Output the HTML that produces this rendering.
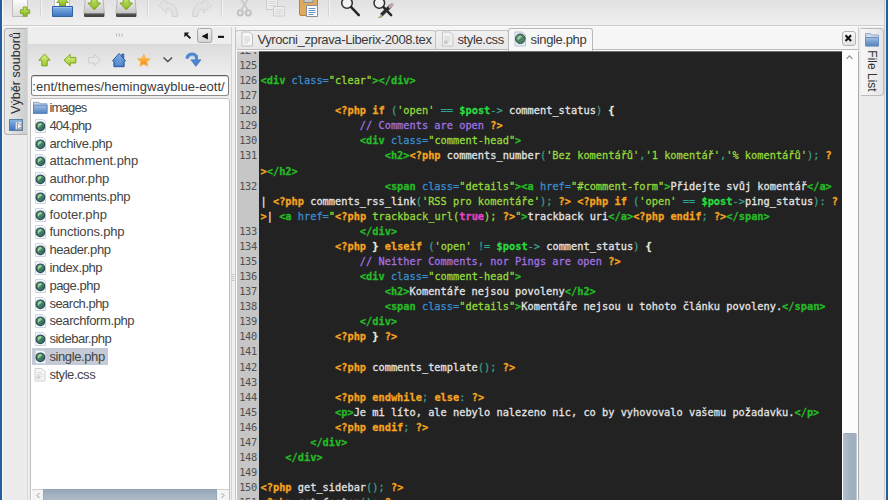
<!DOCTYPE html>
<html lang="cs"><head><meta charset="utf-8"><title>single.php</title>
<style>
html,body{margin:0;padding:0}
body{width:888px;height:500px;overflow:hidden;position:relative;background:#ececec;font-family:"Liberation Sans",sans-serif;font-size:13px;color:#333}
.abs,.abs>*{position:absolute}
div{box-sizing:border-box}
#win{position:absolute;left:0;top:0;width:888px;height:500px;overflow:hidden}
#win>*{position:absolute}
#bl{left:0;top:0;width:2px;height:500px;background:#235f9e}
#bl2{left:2px;top:0;width:1px;height:500px;background:#fbfbfb}
#br{left:886px;top:0;width:2px;height:500px;background:#235f9e}
#br2{left:884px;top:0;width:2px;height:500px;background:linear-gradient(90deg,#d2c9c9 50%,#e6e8ef 50%)}
#tb{left:3px;top:0;width:882px;height:25px;background:linear-gradient(#e1e1e1,#f0f0f0)}
#tbl{left:3px;top:25px;width:882px;height:2px;background:linear-gradient(#cdcdcd 50%,#fafafa 50%)}
.sep{top:0;width:1px;height:20px;background:#d2d2d2;position:absolute}
.ico{position:absolute}
/* left tab */
#ltab{left:4px;top:28px;width:23px;height:107px;border:1px solid #b4b4b4;border-right:none;border-radius:4px 0 0 4px;background:linear-gradient(90deg,#eaeaea,#cdcdcd)}
#ltab span{position:absolute;left:-38.800px;top:25px;width:100px;height:20px;line-height:20px;transform:rotate(-90deg);font-size:12.6px;color:#2b2b2b;white-space:nowrap;text-align:left}
/* left panel */
#lp{left:27px;top:27px;width:204px;height:473px;background:#eeeeee;border-left:1px solid #d8d8d8}
#lph{left:28px;top:27px;width:203px;height:18px;background:#eeeeee;border-bottom:1px solid #d9d9d9}
#nav{left:28px;top:45px;width:203px;height:31px;background:linear-gradient(#dcdcdc,#efefef)}
#path{left:31px;top:75px;width:198px;height:21px;background:#fff;border:1px solid #7d7d7d;border-top-color:#5f5f5f;border-bottom-color:#8c8c8c;border-radius:3px;overflow:hidden;box-shadow:inset 0 1px 1px #d8d8d8}
#pathin{position:absolute;left:1px;top:0;width:195px;height:19px;overflow:hidden}
#path span{position:absolute;left:-0.700px;top:2px;line-height:17px;font-size:13px;color:#3c3c3c;white-space:nowrap;letter-spacing:0.03px}
#fl{left:30px;top:98px;width:200px;height:405px;background:#fff;border:1px solid #bebebe;border-radius:3px}
.fr{position:absolute;left:33px;height:18px;white-space:nowrap}
.fi{position:absolute;left:0;top:1px;width:16px;height:16px}
.fn{position:absolute;left:16.400px;top:0;height:18px;line-height:18px;font-size:13px;color:#444}
.selbg{position:absolute;left:-1px;top:0;width:76px;height:17px;background:#c5cbd6}
#hs{left:32px;top:489px;width:197px;height:11px;background:#f4f4f4;border-top:1px solid #d0d0d0}
#hst{left:43px;top:489px;width:174px;height:14px;background:linear-gradient(#96a6b7,#a9b7c5 60%,#b4c0cc);border-left:1px solid #97a8ba;border-right:1px solid #97a8ba}
/* splitter */
#spl{left:231px;top:27px;width:4px;height:473px;background:#f1f1f1;border-left:1px solid #d4d4d4}
/* tabs */
#tabbar{left:235px;top:27px;width:624px;height:22px;background:#f6f6f6;border-left:1px solid #c6c6c6;border-right:1px solid #cfcfcf}
.tab{position:absolute;top:30px;height:20px;border:1px solid #c2c2c2;border-bottom:none;border-radius:3px 3px 0 0;background:linear-gradient(#f1f1f1,#e6e6e6);white-space:nowrap}
.tab span{position:absolute;top:0;line-height:17px;font-size:13px;color:#3a3a3a}
.tab.act{top:28px;height:23px;background:#f7f7f7;border-color:#b9b9b9}
.tab.act span{top:2px}
#tabline{left:235px;top:49px;width:624px;height:2px;background:linear-gradient(#bcbcbc 50%,#fbfbfb 50%)}
#ed{left:259px;top:51px;width:583px;height:449px;background:#222222;border-top:1px solid #6e6e6e;overflow:hidden}
#gut{left:237px;top:51px;width:22px;height:449px;background:#c6c6c6;border-top:1px solid #d8d8d8;overflow:hidden}
#gutl{left:235px;top:49px;width:2px;height:451px;background:linear-gradient(90deg,#c6c6c6 50%,#fbfbfb 50%)}
.ln,.cl{position:absolute;font-family:"DejaVu Sans Mono","Liberation Mono",monospace;font-size:10.32px;line-height:15px;height:15px;white-space:pre;transform:scaleY(1.09);transform-origin:0 11px}
.ln{left:239.3px;color:#505050;letter-spacing:-0.4px}
.cl{left:260.5px;color:#e6e6e6;-webkit-text-stroke:0.25px}
.t{color:#26bb26;font-weight:bold}
.a{color:#3a8ed0}
.s{color:#98dc3a}
.k{color:#f3a420;font-weight:bold}
.p{color:#3d9f8b}
.o{color:#2aa596}
.v{color:#2bd940;font-weight:bold}
.c{color:#a372e2}
.m{color:#e644c4;font-weight:bold}
.b{color:#ecebd2;font-weight:bold}
#vs{left:842px;top:51px;width:17px;height:449px;background:#fcfcfc;border-right:1px solid #aeaaaa}
#vst{left:843px;top:433px;width:14px;height:70px;background:linear-gradient(90deg,#b4c0cb,#a3b2c1 45%,#9badbd 88%,#ccd5de);border-top:1px solid #97a8ba;border-radius:2px 2px 0 0}
#cls{left:841.500px;top:31px;width:14px;height:14.500px;border:1px solid #b5b5b5;border-radius:3px;background:linear-gradient(#f8f8f8,#e4e4e4)}
#rtab{left:861px;top:28px;width:22.500px;height:68px;border:1px solid #bdbdbd;border-left:none;border-radius:0 4px 4px 0;background:linear-gradient(90deg,#f6f6f6,#e6e6e6)}
#rtab span{position:absolute;left:-14px;top:31.500px;width:50px;height:20px;line-height:20px;transform:rotate(90deg);font-size:12px;color:#333;white-space:nowrap;text-align:center}
#rp{left:860px;top:27px;width:25px;height:473px;background:#ececec}
</style></head><body>
<svg width="0" height="0" style="position:absolute">
<defs>
<linearGradient id="gG" x1="0" y1="0" x2="0" y2="1"><stop offset="0" stop-color="#c8e66a"/><stop offset="1" stop-color="#86b81f"/></linearGradient>
<linearGradient id="gB" x1="0" y1="0" x2="0" y2="1"><stop offset="0" stop-color="#86b4e8"/><stop offset="1" stop-color="#3a72bc"/></linearGradient>
<linearGradient id="gP" x1="0" y1="0" x2="0" y2="1"><stop offset="0" stop-color="#ffffff"/><stop offset="1" stop-color="#dcdcdc"/></linearGradient>
<linearGradient id="gD" x1="0" y1="0" x2="0" y2="1"><stop offset="0" stop-color="#f2f2f2"/><stop offset="0.8" stop-color="#bdbdbd"/><stop offset="1" stop-color="#555"/></linearGradient>
<linearGradient id="gB2" x1="0" y1="0" x2="0" y2="1"><stop offset="0" stop-color="#a3c0e4"/><stop offset="1" stop-color="#4f7fbe"/></linearGradient>
<linearGradient id="gG2" x1="0" y1="0" x2="0" y2="1"><stop offset="0" stop-color="#dcee8c"/><stop offset="1" stop-color="#9fca2e"/></linearGradient>
<linearGradient id="gBtn" x1="0" y1="0" x2="0" y2="1"><stop offset="0" stop-color="#efefef"/><stop offset="1" stop-color="#d4d4d4"/></linearGradient>
<linearGradient id="gS" x1="0" y1="0" x2="0" y2="1"><stop offset="0" stop-color="#ffd05c"/><stop offset="1" stop-color="#f5820f"/></linearGradient>
</defs></svg>
<div id="win">
<div id="tb"></div><div id="tbl"></div>
<div id="rp"></div>
<div id="lp"></div><div id="lph"></div><div id="nav"></div>
<div id="ltab"><span>Výběr souborů</span></div>
<div id="path"><div id="pathin"><span>:ent/themes/hemingwayblue-eott/</span></div></div>
<div id="fl"></div>
<div class="fr" style="top:99.1px"><svg class="fi" viewBox="0 0 16 16"><path d="M.5 2.300h5.300l1 1.500h7.200v9.700h-13.500z" fill="#c5d4e6" stroke="#8aa3c4"/><path d="M.5 5.200h13.500v8.300h-13.500z" fill="url(#gB2)" stroke="#5f86bb"/></svg><span class="fn" style="letter-spacing:-0.787px">images</span></div>
<div class="fr" style="top:116.87px"><svg class="fi" viewBox="0 0 16 16"><path d="M2.500 1.500h7.500l2.500 2.500v10.500h-10z" fill="#f5f7fb" stroke="#cdd5e4"/><circle cx="7.400" cy="8.300" r="4.300" fill="#43805f" stroke="#2b4d5e" stroke-width="1.200"/><path d="M4.700 7.200c.8-2 2.800-2.600 3.800-1.700s-.4 1.900-1.400 2.300s-1.300 2.200-2.200 1.400z" fill="#9ed09a"/><path d="M8.500 10.500c1-.2 2-1 2.300-2" stroke="#2a4f70" fill="none"/></svg><span class="fn" style="letter-spacing:-0.771px">404.php</span></div>
<div class="fr" style="top:134.64px"><svg class="fi" viewBox="0 0 16 16"><path d="M2.500 1.500h7.500l2.500 2.500v10.500h-10z" fill="#f5f7fb" stroke="#cdd5e4"/><circle cx="7.400" cy="8.300" r="4.300" fill="#43805f" stroke="#2b4d5e" stroke-width="1.200"/><path d="M4.700 7.200c.8-2 2.800-2.600 3.800-1.700s-.4 1.900-1.400 2.300s-1.300 2.200-2.200 1.400z" fill="#9ed09a"/><path d="M8.500 10.500c1-.2 2-1 2.300-2" stroke="#2a4f70" fill="none"/></svg><span class="fn" style="letter-spacing:-0.402px">archive.php</span></div>
<div class="fr" style="top:152.41px"><svg class="fi" viewBox="0 0 16 16"><path d="M2.500 1.500h7.500l2.500 2.500v10.500h-10z" fill="#f5f7fb" stroke="#cdd5e4"/><circle cx="7.400" cy="8.300" r="4.300" fill="#43805f" stroke="#2b4d5e" stroke-width="1.200"/><path d="M4.700 7.200c.8-2 2.800-2.600 3.800-1.700s-.4 1.900-1.400 2.300s-1.300 2.200-2.200 1.400z" fill="#9ed09a"/><path d="M8.500 10.500c1-.2 2-1 2.300-2" stroke="#2a4f70" fill="none"/></svg><span class="fn" style="letter-spacing:-0.06px">attachment.php</span></div>
<div class="fr" style="top:170.18px"><svg class="fi" viewBox="0 0 16 16"><path d="M2.500 1.500h7.500l2.500 2.500v10.500h-10z" fill="#f5f7fb" stroke="#cdd5e4"/><circle cx="7.400" cy="8.300" r="4.300" fill="#43805f" stroke="#2b4d5e" stroke-width="1.200"/><path d="M4.700 7.200c.8-2 2.800-2.600 3.800-1.700s-.4 1.900-1.400 2.300s-1.300 2.200-2.200 1.400z" fill="#9ed09a"/><path d="M8.500 10.500c1-.2 2-1 2.300-2" stroke="#2a4f70" fill="none"/></svg><span class="fn" style="letter-spacing:-0.185px">author.php</span></div>
<div class="fr" style="top:187.95px"><svg class="fi" viewBox="0 0 16 16"><path d="M2.500 1.500h7.500l2.500 2.500v10.500h-10z" fill="#f5f7fb" stroke="#cdd5e4"/><circle cx="7.400" cy="8.300" r="4.300" fill="#43805f" stroke="#2b4d5e" stroke-width="1.200"/><path d="M4.700 7.200c.8-2 2.800-2.600 3.800-1.700s-.4 1.900-1.400 2.300s-1.300 2.200-2.200 1.400z" fill="#9ed09a"/><path d="M8.500 10.500c1-.2 2-1 2.300-2" stroke="#2a4f70" fill="none"/></svg><span class="fn" style="letter-spacing:-0.38px">comments.php</span></div>
<div class="fr" style="top:205.72px"><svg class="fi" viewBox="0 0 16 16"><path d="M2.500 1.500h7.500l2.500 2.500v10.500h-10z" fill="#f5f7fb" stroke="#cdd5e4"/><circle cx="7.400" cy="8.300" r="4.300" fill="#43805f" stroke="#2b4d5e" stroke-width="1.200"/><path d="M4.700 7.200c.8-2 2.800-2.600 3.800-1.700s-.4 1.900-1.400 2.300s-1.300 2.200-2.200 1.400z" fill="#9ed09a"/><path d="M8.500 10.500c1-.2 2-1 2.300-2" stroke="#2a4f70" fill="none"/></svg><span class="fn" style="letter-spacing:-0.023px">footer.php</span></div>
<div class="fr" style="top:223.49px"><svg class="fi" viewBox="0 0 16 16"><path d="M2.500 1.500h7.500l2.500 2.500v10.500h-10z" fill="#f5f7fb" stroke="#cdd5e4"/><circle cx="7.400" cy="8.300" r="4.300" fill="#43805f" stroke="#2b4d5e" stroke-width="1.200"/><path d="M4.700 7.200c.8-2 2.800-2.600 3.800-1.700s-.4 1.900-1.400 2.300s-1.300 2.200-2.200 1.400z" fill="#9ed09a"/><path d="M8.500 10.500c1-.2 2-1 2.300-2" stroke="#2a4f70" fill="none"/></svg><span class="fn" style="letter-spacing:-0.188px">functions.php</span></div>
<div class="fr" style="top:241.26px"><svg class="fi" viewBox="0 0 16 16"><path d="M2.500 1.500h7.500l2.500 2.500v10.500h-10z" fill="#f5f7fb" stroke="#cdd5e4"/><circle cx="7.400" cy="8.300" r="4.300" fill="#43805f" stroke="#2b4d5e" stroke-width="1.200"/><path d="M4.700 7.200c.8-2 2.800-2.600 3.800-1.700s-.4 1.900-1.400 2.300s-1.300 2.200-2.200 1.400z" fill="#9ed09a"/><path d="M8.500 10.500c1-.2 2-1 2.300-2" stroke="#2a4f70" fill="none"/></svg><span class="fn" style="letter-spacing:-0.388px">header.php</span></div>
<div class="fr" style="top:259.03px"><svg class="fi" viewBox="0 0 16 16"><path d="M2.500 1.500h7.500l2.500 2.500v10.500h-10z" fill="#f5f7fb" stroke="#cdd5e4"/><circle cx="7.400" cy="8.300" r="4.300" fill="#43805f" stroke="#2b4d5e" stroke-width="1.200"/><path d="M4.700 7.200c.8-2 2.800-2.600 3.800-1.700s-.4 1.900-1.400 2.300s-1.300 2.200-2.200 1.400z" fill="#9ed09a"/><path d="M8.500 10.500c1-.2 2-1 2.300-2" stroke="#2a4f70" fill="none"/></svg><span class="fn" style="letter-spacing:-0.399px">index.php</span></div>
<div class="fr" style="top:276.8px"><svg class="fi" viewBox="0 0 16 16"><path d="M2.500 1.500h7.500l2.500 2.500v10.500h-10z" fill="#f5f7fb" stroke="#cdd5e4"/><circle cx="7.400" cy="8.300" r="4.300" fill="#43805f" stroke="#2b4d5e" stroke-width="1.200"/><path d="M4.700 7.200c.8-2 2.800-2.600 3.800-1.700s-.4 1.900-1.400 2.300s-1.300 2.200-2.200 1.400z" fill="#9ed09a"/><path d="M8.500 10.500c1-.2 2-1 2.300-2" stroke="#2a4f70" fill="none"/></svg><span class="fn" style="letter-spacing:-0.492px">page.php</span></div>
<div class="fr" style="top:294.57px"><svg class="fi" viewBox="0 0 16 16"><path d="M2.500 1.500h7.500l2.500 2.500v10.500h-10z" fill="#f5f7fb" stroke="#cdd5e4"/><circle cx="7.400" cy="8.300" r="4.300" fill="#43805f" stroke="#2b4d5e" stroke-width="1.200"/><path d="M4.700 7.200c.8-2 2.800-2.600 3.800-1.700s-.4 1.900-1.400 2.300s-1.300 2.200-2.200 1.400z" fill="#9ed09a"/><path d="M8.500 10.500c1-.2 2-1 2.300-2" stroke="#2a4f70" fill="none"/></svg><span class="fn" style="letter-spacing:-0.513px">search.php</span></div>
<div class="fr" style="top:312.34px"><svg class="fi" viewBox="0 0 16 16"><path d="M2.500 1.500h7.500l2.500 2.500v10.500h-10z" fill="#f5f7fb" stroke="#cdd5e4"/><circle cx="7.400" cy="8.300" r="4.300" fill="#43805f" stroke="#2b4d5e" stroke-width="1.200"/><path d="M4.700 7.200c.8-2 2.800-2.600 3.800-1.700s-.4 1.900-1.400 2.300s-1.300 2.200-2.200 1.400z" fill="#9ed09a"/><path d="M8.500 10.500c1-.2 2-1 2.300-2" stroke="#2a4f70" fill="none"/></svg><span class="fn" style="letter-spacing:-0.395px">searchform.php</span></div>
<div class="fr" style="top:330.11px"><svg class="fi" viewBox="0 0 16 16"><path d="M2.500 1.500h7.500l2.500 2.500v10.500h-10z" fill="#f5f7fb" stroke="#cdd5e4"/><circle cx="7.400" cy="8.300" r="4.300" fill="#43805f" stroke="#2b4d5e" stroke-width="1.200"/><path d="M4.700 7.200c.8-2 2.800-2.600 3.800-1.700s-.4 1.900-1.400 2.300s-1.300 2.200-2.200 1.400z" fill="#9ed09a"/><path d="M8.500 10.500c1-.2 2-1 2.300-2" stroke="#2a4f70" fill="none"/></svg><span class="fn" style="letter-spacing:-0.494px">sidebar.php</span></div>
<div class="fr" style="top:347.88px"><div class="selbg"></div><svg class="fi" viewBox="0 0 16 16"><path d="M2.500 1.500h7.500l2.500 2.500v10.500h-10z" fill="#f5f7fb" stroke="#cdd5e4"/><circle cx="7.400" cy="8.300" r="4.300" fill="#43805f" stroke="#2b4d5e" stroke-width="1.200"/><path d="M4.700 7.200c.8-2 2.800-2.600 3.800-1.700s-.4 1.900-1.400 2.300s-1.300 2.200-2.200 1.400z" fill="#9ed09a"/><path d="M8.500 10.500c1-.2 2-1 2.300-2" stroke="#2a4f70" fill="none"/></svg><span class="fn" style="letter-spacing:-0.388px">single.php</span></div>
<div class="fr" style="top:365.65px"><svg class="fi" viewBox="0 0 16 16"><path d="M2 1.500h7l3 3v9.500h-10z" fill="#f6f6f6" stroke="#d2d2d2"/><path d="M4 5.500h5M4 7.500h6M4 9.500h6M4 11.500h4" stroke="#dcdcdc"/><rect x="3.500" y="8.500" width="3.500" height="3.500" fill="#d6d6d6"/></svg><span class="fn" style="letter-spacing:-0.449px">style.css</span></div>
<div id="hs"></div><div id="hst"></div>
<div id="spl"></div>
<div id="tabbar"></div>
<div class="tab" style="left:235px;width:201px"><span style="left:21.4px;letter-spacing:-0.38px">Vyrocni_zprava-Liberix-2008.tex</span></div>
<div class="tab" style="left:435px;width:74px"><span style="left:21.5px;letter-spacing:-0.4px">style.css</span></div>
<div id="tabline"></div>
<div class="tab act" style="left:508px;width:85px"><span style="left:21.6px;letter-spacing:-0.36px">single.php</span></div>
<div id="cls"></div>
<div id="ed"></div>
<div id="gut"></div><div id="gutl"></div>
<div id="codewrap" style="left:0;top:0;width:842px;height:500px;overflow:hidden;clip-path:inset(52px 0 0 0)">
<div class="ln" style="top:42.87px">124</div>
<div class="ln" style="top:57.95px">125</div>
<div class="ln" style="top:73.03px">126</div>
<div class="ln" style="top:88.11px">127</div>
<div class="ln" style="top:103.18px">128</div>
<div class="ln" style="top:118.26px">129</div>
<div class="ln" style="top:133.34px">130</div>
<div class="ln" style="top:148.42px">131</div>
<div class="ln" style="top:178.57px">132</div>
<div class="ln" style="top:223.81px">133</div>
<div class="ln" style="top:238.89px">134</div>
<div class="ln" style="top:253.96px">135</div>
<div class="ln" style="top:269.04px">136</div>
<div class="ln" style="top:284.12px">137</div>
<div class="ln" style="top:299.2px">138</div>
<div class="ln" style="top:314.28px">139</div>
<div class="ln" style="top:329.35px">140</div>
<div class="ln" style="top:344.43px">141</div>
<div class="ln" style="top:359.51px">142</div>
<div class="ln" style="top:374.59px">143</div>
<div class="ln" style="top:389.67px">144</div>
<div class="ln" style="top:404.74px">145</div>
<div class="ln" style="top:419.82px">146</div>
<div class="ln" style="top:434.9px">147</div>
<div class="ln" style="top:449.98px">148</div>
<div class="ln" style="top:465.06px">149</div>
<div class="ln" style="top:480.13px">150</div>
<div class="ln" style="top:495.21px">151</div>
<div class="cl" style="top:73.03px"><span class="t">&lt;div</span> <span class="a">class=</span><span class="s">"clear"</span><span class="t">&gt;&lt;/div&gt;</span></div>
<div class="cl" style="top:103.18px">            <span class="k">&lt;?php</span> <span class="k">if</span> <span class="p">(</span><span class="s">'open'</span> <span class="o">==</span> <span class="v">$post</span><span class="p">-&gt;</span> comment_status<span class="p">)</span> <span class="b">{</span></div>
<div class="cl" style="top:118.26px">                <span class="c">// Comments are open </span><span class="k">?&gt;</span></div>
<div class="cl" style="top:133.34px">                <span class="t">&lt;div</span> <span class="a">class=</span><span class="s">"comment-head"</span><span class="t">&gt;</span></div>
<div class="cl" style="top:148.42px">                    <span class="t">&lt;h2&gt;</span><span class="k">&lt;?php</span> comments_number<span class="p">(</span><span class="s">'Bez komentářů'</span><span class="p">,</span><span class="s">'1 komentář'</span><span class="p">,</span><span class="s">'% komentářů'</span><span class="p">);</span> <span class="k">?</span></div>
<div class="cl" style="top:163.5px"><span class="k">&gt;</span><span class="t">&lt;/h2&gt;</span></div>
<div class="cl" style="top:178.57px">                    <span class="t">&lt;span</span> <span class="a">class=</span><span class="s">"details"</span><span class="t">&gt;&lt;a</span> <span class="a">href=</span><span class="s">"#comment-form"</span><span class="t">&gt;</span>Přidejte svůj komentář<span class="t">&lt;/a&gt;</span></div>
<div class="cl" style="top:193.65px">| <span class="k">&lt;?php</span> comments_rss_link<span class="p">(</span><span class="s">'RSS pro komentáře'</span><span class="p">);</span> <span class="k">?&gt;</span> <span class="k">&lt;?php</span> <span class="k">if</span> <span class="p">(</span><span class="s">'open'</span> <span class="o">==</span> <span class="v">$post</span><span class="p">-&gt;</span>ping_status<span class="p">):</span> <span class="k">?</span></div>
<div class="cl" style="top:208.73px"><span class="k">&gt;</span>| <span class="t">&lt;a</span> <span class="a">href=</span><span class="s">"</span><span class="k">&lt;?php</span><span class="s"> trackback_url(</span><span class="m">true</span><span class="s">); </span><span class="k">?&gt;</span><span class="s">"</span><span class="t">&gt;</span>trackback uri<span class="t">&lt;/a&gt;</span><span class="k">&lt;?php</span> <span class="k">endif</span><span class="p">;</span> <span class="k">?&gt;</span><span class="t">&lt;/span&gt;</span></div>
<div class="cl" style="top:223.81px">                <span class="t">&lt;/div&gt;</span></div>
<div class="cl" style="top:238.89px">            <span class="k">&lt;?php</span> <span class="b">}</span> <span class="k">elseif</span> <span class="p">(</span><span class="s">'open'</span> <span class="o">!=</span> <span class="v">$post</span><span class="p">-&gt;</span> comment_status<span class="p">)</span> <span class="b">{</span></div>
<div class="cl" style="top:253.96px">                <span class="c">// Neither Comments, nor Pings are open </span><span class="k">?&gt;</span></div>
<div class="cl" style="top:269.04px">                <span class="t">&lt;div</span> <span class="a">class=</span><span class="s">"comment-head"</span><span class="t">&gt;</span></div>
<div class="cl" style="top:284.12px">                    <span class="t">&lt;h2&gt;</span>Komentáře nejsou povoleny<span class="t">&lt;/h2&gt;</span></div>
<div class="cl" style="top:299.2px">                    <span class="t">&lt;span</span> <span class="a">class=</span><span class="s">"details"</span><span class="t">&gt;</span>Komentáře nejsou u tohoto článku povoleny.<span class="t">&lt;/span&gt;</span></div>
<div class="cl" style="top:314.28px">                <span class="t">&lt;/div&gt;</span></div>
<div class="cl" style="top:329.35px">            <span class="k">&lt;?php</span> <span class="b">}</span> <span class="k">?&gt;</span></div>
<div class="cl" style="top:359.51px">            <span class="k">&lt;?php</span> comments_template<span class="p">();</span> <span class="k">?&gt;</span></div>
<div class="cl" style="top:389.67px">            <span class="k">&lt;?php</span> <span class="k">endwhile</span><span class="p">;</span> <span class="k">else</span><span class="p">:</span> <span class="k">?&gt;</span></div>
<div class="cl" style="top:404.74px">            <span class="t">&lt;p&gt;</span>Je mi líto, ale nebylo nalezeno nic, co by vyhovovalo vašemu požadavku.<span class="t">&lt;/p&gt;</span></div>
<div class="cl" style="top:419.82px">            <span class="k">&lt;?php</span> <span class="k">endif</span><span class="p">;</span> <span class="k">?&gt;</span></div>
<div class="cl" style="top:434.9px">        <span class="t">&lt;/div&gt;</span></div>
<div class="cl" style="top:449.98px">    <span class="t">&lt;/div&gt;</span></div>
<div class="cl" style="top:480.13px"><span class="k">&lt;?php</span> get_sidebar<span class="p">();</span> <span class="k">?&gt;</span></div>
<div class="cl" style="top:495.21px"><span class="k">&lt;?php</span> get_footer<span class="p">();</span> <span class="k">?&gt;</span></div>
</div>
<div id="vs"></div><div id="vst"></div>
<div id="rtab"><span>File List</span></div>
<svg id="tbi" width="888" height="27" viewBox="0 0 888 27" style="left:0;top:0;overflow:hidden">
<defs><linearGradient id="gD2" x1="0" y1="0" x2="0" y2="1"><stop offset="0" stop-color="#f4f4f4"/><stop offset="1" stop-color="#c4c4c4"/></linearGradient></defs>
<g stroke="#d3d3d3"><path d="M40.500 0v17M147.500 0v17M221.500 0v17M328.500 0v17"/></g>
<g stroke="#f6f6f6"><path d="M41.500 0v17M148.500 0v17M222.500 0v17M329.500 0v17"/></g>
<!-- new -->
<path d="M12.500 -2h15v18.500h-15z" fill="url(#gP)" stroke="#bcbcbc"/>
<path d="M23.200 7h3.600v2.800h2.800v3.600h-2.800v2.800h-3.600v-2.800h-2.800v-3.600h2.800z" fill="url(#gG)" stroke="#74a01a" stroke-width=".9"/>
<!-- open -->
<path d="M54.500 -2h15v10h-15z" fill="#fbfbfb" stroke="#c4c4c4"/>
<path d="M59.500 6v-3.500h-2.800l5.800-6l5.800 6h-2.800v3.500z" fill="url(#gG)" stroke="#74a01a" stroke-width=".9"/>
<path d="M52.500 6.500h20v10h-20z" fill="url(#gB)" stroke="#2f62a5"/>
<path d="M53.500 7.500h18" stroke="#9cc0ea"/>
<!-- save / save as -->
<path d="M85.500 -2h17.400l1.500 15.500h-20.400z" fill="url(#gD2)" stroke="#b4b4b4"/>
<rect x="84" y="13.2" width="20.4" height="3.8" rx="1" fill="#474747"/>
<rect x="85" y="13.2" width="18.4" height="1" fill="#8a8a8a"/>
<path d="M91.2 -2h6v5h3.3l-6.3 6.8l-6.3-6.8h3.3z" fill="url(#gG)" stroke="#74a01a" stroke-width=".9"/>
<path d="M117.500 -2h17.400l1.500 15.500h-20.400z" fill="url(#gD2)" stroke="#b4b4b4"/>
<rect x="116" y="13.2" width="20.4" height="3.8" rx="1" fill="#474747"/>
<rect x="117" y="13.2" width="18.4" height="1" fill="#8a8a8a"/>
<path d="M123.2 -2h6v5h3.3l-6.3 6.8l-6.3-6.8h3.3z" fill="url(#gG)" stroke="#74a01a" stroke-width=".9"/>
<!-- undo / redo (disabled) -->
<path d="M158.500 5.500l8-7v4.500c7 0 11 4 11 13.500h-5c0-5-2-7.500-6-7.500v4z" fill="#e2e2e2" stroke="#d2d2d2"/>
<path d="M211.500 5.500l-8-7v4.500c-7 0-11 4-11 13.500h5c0-5 2-7.500 6-7.500v4z" fill="#e2e2e2" stroke="#d2d2d2"/>
<!-- cut (disabled) -->
<g fill="none" stroke="#c9c9c9"><path d="M241.500 9.500l7.500-12M247.500 9.500l-7.500-12" stroke-width="1.800"/><circle cx="240.300" cy="12.800" r="2.600" stroke-width="2" stroke="#c2c2c2"/><circle cx="248.300" cy="12.800" r="2.600" stroke-width="2" stroke="#c2c2c2"/></g>
<!-- copy (disabled) -->
<path d="M266.500 -2h11v11.500h-11z" fill="#ededed" stroke="#cdcdcd"/><path d="M268.500 1.500h7M268.500 3.500h7M268.500 5.500h7" stroke="#d6d6d6"/>
<path d="M273.500 6.500h11v9.500h-11z" fill="#ededed" stroke="#cdcdcd"/><path d="M275.500 9.500h7M275.500 11.500h7M275.500 13.500h7" stroke="#d9d9d9"/>
<!-- paste -->
<rect x="299.500" y="-1.500" width="18" height="17" rx="1.500" fill="#dcab60" stroke="#b8873c"/>
<rect x="304" y="-3" width="9" height="5.500" fill="#c9c9c9" stroke="#8f8f8f"/>
<path d="M306.500 5.500h11v11h-11z" fill="#fff" stroke="#8e8e8e"/>
<path d="M308.500 8.500h7M308.500 10.500h7M308.500 12.500h7M308.500 14.500h5" stroke="#6a93cc"/>
<!-- find -->
<circle cx="347" cy="3" r="5.300" fill="#f3f3f3" stroke="#303030" stroke-width="1.500"/>
<path d="M351.200 7.200l7.600 8" stroke="#262626" stroke-width="2.500" stroke-linecap="round"/>
<!-- find & replace -->
<circle cx="379.300" cy="3" r="5.300" fill="#f3f3f3" stroke="#303030" stroke-width="1.500"/>
<path d="M383.500 7.200l7.600 8" stroke="#262626" stroke-width="2.500" stroke-linecap="round"/>
<path d="M390.800 5.800l-9.500 9.200" stroke="#2e2e2e" stroke-width="3.600"/>
<path d="M391.800 4.800l-1.700 1.700" stroke="#b9a6a6" stroke-width="3.600" stroke-linecap="round"/>
<path d="M381.800 14.500l-3.300 3l3.600-.6z" fill="#e8d28a" stroke="#6b5a2a" stroke-width=".5"/>
</svg>
<svg id="navi" width="240" height="52" viewBox="0 26 240 52" style="left:0;top:26px;overflow:visible">
<g stroke="#b9b9b9"><path d="M116.500 33.500v3M119.300 33.500v3M122.100 33.500v3"/></g>
<path d="M184.400 32.500h4.800l-1.700 1.700l3.500 3.500l-1.300 1.300l-3.500-3.500l-1.800 1.700z" fill="#151515"/>
<rect x="197.500" y="28.500" width="14.300" height="14" rx="2" fill="url(#gBtn)" stroke="#a6a6a6"/>
<path d="M207.900 33v6.600l-6.400-3.300z" fill="#111"/>
<rect x="218" y="35.800" width="6" height="2.100" fill="#111"/>
<path d="M44.500 54l5.600 6.200h-2.900v5.600h-5.400v-5.600h-2.900z" fill="url(#gG2)" stroke="#7aa61b" stroke-width="1" stroke-linejoin="round"/>
<path d="M64 60.200l6.200-5.800v3h5.600v5.600h-5.600v3z" fill="url(#gG2)" stroke="#7aa61b" stroke-width="1" stroke-linejoin="round"/>
<path d="M100.500 60.200l-6.200-5.800v3h-5.600v5.600h5.600v3z" fill="#e6e6e6" stroke="#cdcdcd" stroke-width="1" stroke-linejoin="round"/>
<path d="M121.800 54h2v4.500l-2-2z" fill="#3f74bb" stroke="#2a5ca6" stroke-width=".8"/>
<path d="M112.500 60.800l6.500-7.300l6.500 7.300l-1.400 .6v5.300h-10.200v-5.300z" fill="url(#gB)" stroke="#2a5ca6" stroke-width="1" stroke-linejoin="round"/>
<path d="M115.500 61l3.500-4l3.500 4v4.500h-7z" fill="#6f9fdb" opacity=".55"/>
<polygon points="143.80,54.50 145.62,58.29 149.79,58.85 146.75,61.76 147.50,65.90 143.80,63.90 140.10,65.90 140.85,61.76 137.81,58.85 141.98,58.29" fill="url(#gS)" stroke="#f2b85a" stroke-width="1.100" stroke-linejoin="round"/>
<path d="M163.500 57.500l4.300 4l4.300-4" fill="none" stroke="#4a4a4a" stroke-width="1.400"/>
<path d="M186.800 58.800a5.400 5.400 0 0 1 9.600-2.600v3.500" fill="none" stroke="#4c86cf" stroke-width="3"/>
<path d="M190.800 59.800h10.200l-5.100 6.600z" fill="#4c86cf" stroke="#3a70ba" stroke-width=".6"/>
<path d="M189.500 57.800a3 3 0 0 1 4.600-.3" fill="none" stroke="#b4cdee" stroke-width="1.100"/>
</svg>
<svg id="misc" width="888" height="500" viewBox="0 0 888 500" style="left:0;top:0;pointer-events:none">
<!-- left tab icon -->
<rect x="9.500" y="119.500" width="13" height="11" fill="url(#gB)" stroke="#5c7fa8"/>
<rect x="15.500" y="121.500" width="6" height="8" fill="#dfe6ee" stroke="#8aa0ba" stroke-width=".6"/>
<path d="M17.500 122.500v7l2-1.800l1.500 2.600l1-.6l-1.500-2.500l2.500-.3z" fill="#f4f4f4" stroke="#666" stroke-width=".6"/>
<!-- tab icons -->
<g transform="translate(241.500,31.500)"><path d="M.5 .5h7.500l3 3v11h-10.500z" fill="#f7f7f7" stroke="#bdbdbd"/><path d="M2.500 5.500h6M2.500 7.500h6M2.500 9.500h6M2.500 11.500h4" stroke="#d0d0d0"/></g>
<g transform="translate(442,31.500)"><path d="M.5 .5h7.500l3 3v11h-10.500z" fill="#f1f1f1" stroke="#c6c6c6"/><path d="M2.500 5.500h6M2.500 7.500h6M2.500 9.500h6M2.500 11.500h4" stroke="#d4d4d4"/><rect x="2" y="9" width="3.500" height="3.500" fill="#c9c9c9"/></g>
<g transform="translate(514.500,31.500)"><path d="M.5 .5h7.500l3 3v11h-10.500z" fill="#e6ecf6" stroke="#b9c5da"/><circle cx="5.800" cy="7.300" r="4.800" fill="#4f8463" stroke="#34564f"/><path d="M2.800 6c1-2.200 3.200-2.600 4.200-1.600s-.5 2-1.500 2.500s-1.500 2.500-2.500 1.500z" fill="#9fcba3"/></g>
<!-- close X -->
<path d="M845.500 35.300l5.600 5.600M851.100 35.300l-5.600 5.600" stroke="#151515" stroke-width="2.100"/>
<!-- scrollbar arrow -->
<path d="M846.500 58.800l3-3l3 3" fill="none" stroke="#8a8a8a" stroke-width="1.100"/>
<!-- right tab folder -->
<path d="M865.500 33.500h5l1 1.500h7v11h-13z" fill="#cbd9ea" stroke="#91a9c6"/>
<path d="M865.500 37.500h13v8.500h-13z" fill="url(#gB2)" stroke="#6a8fc0"/>
<!-- splitter grip -->
<g stroke="#c4c4c4"><path d="M231.500 274.500h3M231.500 276.500h3M231.500 278.500h3M231.500 280.500h3"/></g>
<!-- hscroll arrows -->
<path d="M39.500 493l-2.500 2.500l2.500 2.500" fill="none" stroke="#999" stroke-width="1"/>
<path d="M221.500 493l2.500 2.500l-2.500 2.500" fill="none" stroke="#999" stroke-width="1"/>
</svg>
<div id="bl"></div><div id="bl2"></div><div id="br"></div><div id="br2"></div>
</div>
</body></html>
